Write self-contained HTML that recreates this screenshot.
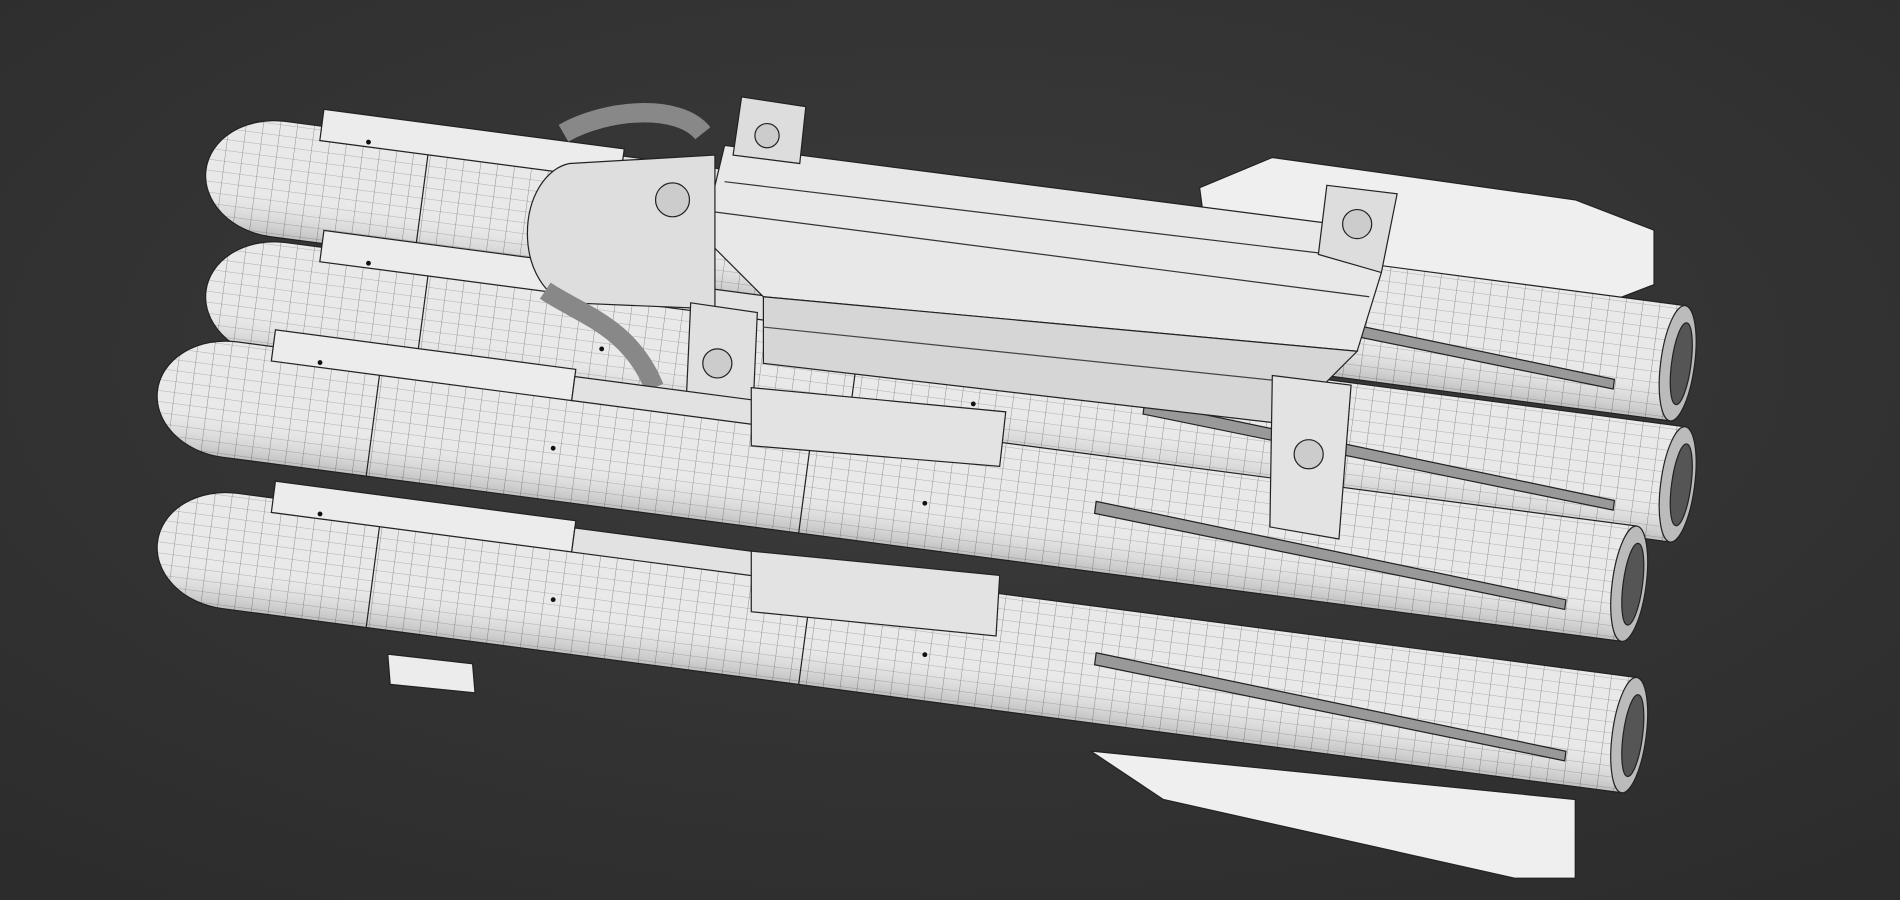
<!DOCTYPE html>
<html><head><meta charset="utf-8"><style>
html,body{margin:0;padding:0;background:#333;}
svg{display:block}
</style></head><body>
<svg width="1900" height="900" viewBox="0 0 1568 743" preserveAspectRatio="none" xmlns="http://www.w3.org/2000/svg">
<defs>
<radialGradient id="bg" cx="50%" cy="40%" r="75%">
<stop offset="0" stop-color="#3c3c3c"/><stop offset="1" stop-color="#2c2c2c"/></radialGradient>
<pattern id="hatch" width="14" height="9" patternUnits="userSpaceOnUse">
<rect width="14" height="9" fill="#e9e9e9"/>
<line x1="0" y1="0" x2="0" y2="9" stroke="#555" stroke-width="0.5"/>
<line x1="0" y1="0" x2="14" y2="0" stroke="#777" stroke-width="0.5"/>
</pattern>
<linearGradient id="tubeShade" x1="0" y1="0" x2="0" y2="1">
<stop offset="0" stop-color="#fff" stop-opacity="0"/>
<stop offset="0.6" stop-color="#fff" stop-opacity="0"/>
<stop offset="1" stop-color="#000" stop-opacity="0.18"/></linearGradient>
<g id="tube">
<path d="M60,-48 L1225,-48 L1225,48 L60,48 A60,48 0 0 1 60,-48 Z" fill="url(#hatch)" stroke="#222" stroke-width="1"/>
<path d="M60,-48 L1225,-48 L1225,48 L60,48 A60,48 0 0 1 60,-48 Z" fill="url(#tubeShade)"/>
<ellipse cx="1225" cy="0" rx="14" ry="48" fill="#bbb" stroke="#222"/>
<ellipse cx="1228" cy="0" rx="8" ry="34" fill="#555" stroke="#222"/>
<line x1="180" y1="-48" x2="180" y2="48" stroke="#222"/>
<line x1="540" y1="-48" x2="540" y2="48" stroke="#222"/>
<rect x="90" y="-62" width="250" height="26" fill="#ececec" stroke="#222"/>
<rect x="340" y="-56" width="180" height="20" fill="#e2e2e2" stroke="#222"/>
<path d="M780,-10 L1175,20 L1175,28 L780,0 Z" fill="#999" stroke="#222"/>
<circle cx="130" cy="-40" r="2" fill="#111"/>
<circle cx="330" cy="5" r="2" fill="#111"/>
<circle cx="640" cy="10" r="2" fill="#111"/>
</g>
</defs>
<rect width="1568" height="743" fill="url(#bg)"/>
<!-- top fin -->
<polygon points="990,155 1050,130 1300,165 1365,190 1365,235 1300,260 1000,230" fill="#efefef" stroke="#222"/>
<!-- tubes 1 & 2 -->
<g transform="translate(170,140) rotate(7.5)"><use href="#tube"/></g>
<g transform="translate(170,240) rotate(7.5)"><use href="#tube"/></g>
<!-- bottom fin -->
<polygon points="900,620 1300,660 1300,725 1250,725 960,660" fill="#efefef" stroke="#222"/>
<polygon points="320,540 390,548 392,572 322,565" fill="#ececec" stroke="#222"/>
<!-- central box -->
<polygon points="598,120 1140,190 1140,225 1120,290 630,245 580,195" fill="#e8e8e8" stroke="#222"/>
<line x1="598" y1="150" x2="1140" y2="215" stroke="#333"/>
<line x1="590" y1="175" x2="1130" y2="245" stroke="#333"/>
<polygon points="630,245 1120,290 1060,350 630,300" fill="#d6d6d6" stroke="#222"/>
<line x1="630" y1="270" x2="1090" y2="318" stroke="#444"/>
<!-- cylinder head -->
<path d="M470,135 L590,128 L590,255 L470,250 A40,58 0 0 1 470,135 Z" fill="#dedede" stroke="#222"/>
<circle cx="555" cy="165" r="14" fill="#ccc" stroke="#222"/>
<path d="M465,110 C500,90 560,85 580,110" stroke="#888" stroke-width="16" fill="none"/>
<path d="M450,240 C480,260 520,270 540,320" stroke="#888" stroke-width="16" fill="none"/>
<!-- brackets -->
<polygon points="612,80 665,88 660,135 605,128" fill="#ddd" stroke="#222"/>
<circle cx="633" cy="112" r="10" fill="#ccc" stroke="#222"/>
<polygon points="1095,153 1153,160 1140,225 1088,210" fill="#ddd" stroke="#222"/>
<circle cx="1120" cy="185" r="12" fill="#ccc" stroke="#222"/>
<polygon points="570,250 625,258 620,370 565,360" fill="#e0e0e0" stroke="#222"/>
<circle cx="592" cy="300" r="12" fill="#ccc" stroke="#222"/>
<!-- tubes 3 & 4 -->
<g transform="translate(130,322) rotate(7.5)"><use href="#tube"/></g>
<polygon points="620,320 830,340 825,385 620,368" fill="#e3e3e3" stroke="#222"/>
<polygon points="1050,310 1115,318 1105,445 1048,435" fill="#e3e3e3" stroke="#222"/>
<circle cx="1080" cy="375" r="12" fill="#ccc" stroke="#222"/>
<g transform="translate(130,447) rotate(7.5)"><use href="#tube"/></g>
<polygon points="620,455 825,475 822,525 620,505" fill="#e3e3e3" stroke="#222"/>
</svg>
</body></html>
